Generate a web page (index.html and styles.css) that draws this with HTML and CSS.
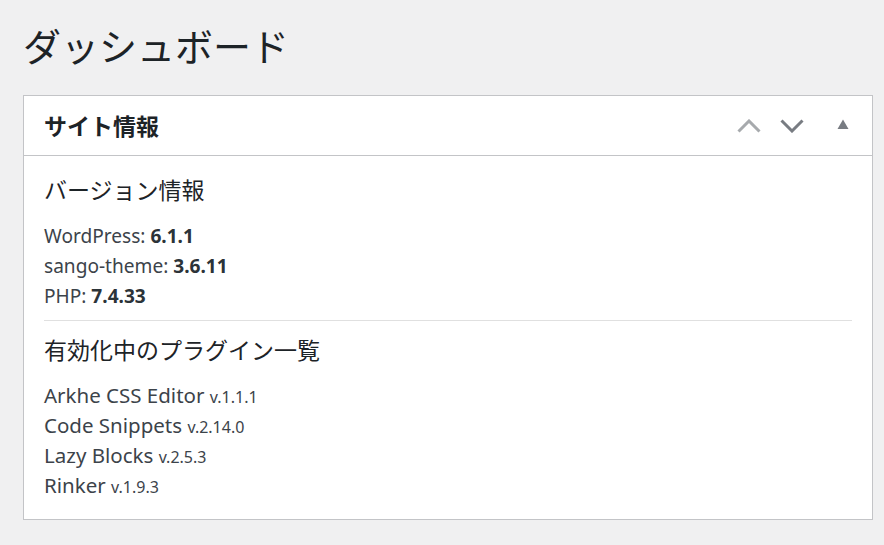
FILE: index.html
```html
<!DOCTYPE html>
<html lang="ja">
<head>
<meta charset="utf-8">
<title>ダッシュボード</title>
<link rel="stylesheet" href="styles.css">
</head>
<body>
<div class="wrap">
  <h1 class="page-title">ダッシュボード</h1>
  <div class="postbox">
    <div class="postbox-header">
      <h2 class="postbox-title">サイト情報</h2>
      <div class="handle-actions">
        <button class="handle-btn" aria-label="上へ移動">
          <svg class="icon icon-disabled" width="24" height="14" viewBox="0 0 24 14"><path d="M1.5 12.5 L12 2 L22.5 12.5" fill="none" stroke="currentColor" stroke-width="3"/></svg>
        </button>
        <button class="handle-btn" aria-label="下へ移動">
          <svg class="icon" width="24" height="14" viewBox="0 0 24 14"><path d="M1.5 1.5 L12 12 L22.5 1.5" fill="none" stroke="currentColor" stroke-width="3"/></svg>
        </button>
        <button class="handle-btn toggle" aria-label="パネルを切り替え">
          <svg class="icon" width="12" height="11" viewBox="0 0 12 11"><path d="M0.5 10 L6 0.5 L11.5 10 Z" fill="currentColor"/></svg>
        </button>
      </div>
    </div>
    <div class="inside">
      <h3 class="section-title">バージョン情報</h3>
      <ul class="info-list">
        <li>WordPress: <strong>6.1.1</strong></li>
        <li>sango-theme: <strong>3.6.11</strong></li>
        <li>PHP: <strong>7.4.33</strong></li>
      </ul>
      <hr class="divider">
      <h3 class="section-title second">有効化中のプラグイン一覧</h3>
      <ul class="plugin-list">
        <li>Arkhe CSS Editor <span class="ver">v.1.1.1</span></li>
        <li>Code Snippets <span class="ver">v.2.14.0</span></li>
        <li>Lazy Blocks <span class="ver">v.2.5.3</span></li>
        <li>Rinker <span class="ver">v.1.9.3</span></li>
      </ul>
    </div>
  </div>
</div>
</body>
</html>
```

FILE: styles.css
```css
html, body {
  margin: 0;
  padding: 0;
  background: #f0f0f1;
}
body {
  font-family: "Noto Sans", "Noto Sans CJK JP", sans-serif;
  color: #3c434a;
}
.wrap {
  padding: 0 11px 0 23px;
}
.page-title {
  margin: 22px 0 24px;
  font-size: 38px;
  line-height: 49px;
  font-weight: 400;
  color: #1d2327;
}
.postbox {
  background: #fff;
  border: 1px solid #c3c4c7;
}
.postbox-header {
  display: flex;
  align-items: center;
  height: 59px;
  border-bottom: 1px solid #c3c4c7;
  padding-left: 20px;
}
.postbox-title {
  margin: 0;
  font-size: 23px;
  font-weight: 700;
  color: #1d2327;
  line-height: 30px;
}
.handle-actions {
  margin-left: auto;
  display: flex;
  align-items: center;
  height: 100%;
}
.handle-btn {
  width: 43px;
  height: 100%;
  border: 0;
  background: transparent;
  padding: 0;
  display: flex;
  align-items: center;
  justify-content: center;
  color: #787c82;
}
.handle-btn.toggle {
  width: 59px;
  padding-bottom: 2px;
}
.icon-disabled {
  color: #a7aaad;
}
.inside {
  padding: 17px 20px 19px;
}
.section-title {
  margin: 0;
  font-size: 23px;
  line-height: 34px;
  font-weight: 400;
  color: #1d2327;
}
.info-list, .plugin-list {
  list-style: none;
  margin: 0;
  padding: 0;
  font-size: 19.1px;
  line-height: 30px;
}
.info-list {
  margin-top: 14px;
}
.info-list strong {
  color: #2c3338;
  font-weight: 700;
}
.divider {
  border: 0;
  border-top: 1px solid #e0e0e0;
  margin: 9px 0 12px;
  height: 0;
}
.plugin-list {
  margin-top: 13px;
  font-size: 20.5px;
}
.plugin-list li {
  height: 30px;
}
.ver {
  font-size: 16px;
  line-height: 1;
}
```
